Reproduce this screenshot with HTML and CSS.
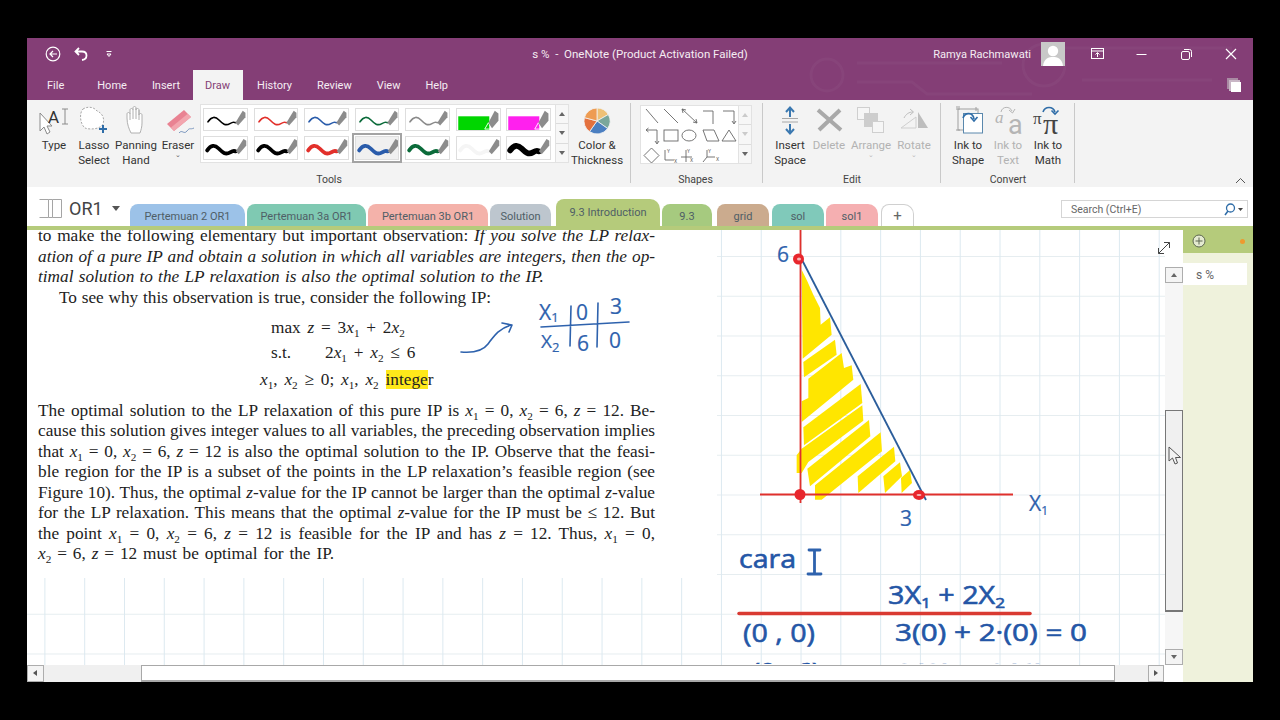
FILE: index.html
```html
<!DOCTYPE html>
<html lang="en">
<head>
  <meta charset="UTF-8">
  <title>s % - OneNote</title>
  <link rel="stylesheet" href="styles.css">
</head>
<body>

  <!-- shared pen drawing for the gallery -->
  <svg class="defs" width="0" height="0">
    <symbol id="pen" viewBox="0 0 44 23">
      <path d="M3 14 C7 8 11 8 15 12 S22 19 27 16 S31 15 33 15" fill="none" stroke="currentColor" stroke-linecap="round"/>
      <path d="M33 15 L41 2 L44 4 L44 9 L36 18 Z" fill="#8c8c8c"/>
    </symbol>
    <symbol id="marker" viewBox="0 0 44 23">
      <rect x="0" y="8" width="34" height="15" fill="currentColor"/>
      <path d="M29 22 L33 15 L37 22 Z" fill="none" stroke="#fff"/>
      <path d="M33 15 L40 2 L44 5 L44 13 L37 21 Z" fill="#8c8c8c"/>
    </symbol>
  </svg>

  <div class="window">

    <!-- Title bar and ribbon tabs -->
    <header class="titlebar">
      <svg class="title-art" width="500" height="62" viewBox="0 0 500 62">
        <circle cx="65" cy="37" r="16" />
        <circle cx="282" cy="27" r="21" />
        <path d="M95 25 H240 M95 44 L150 44 L165 56 H270 M300 10 H470 M320 42 H450" />
      </svg>
      <div class="title-row">
        <div class="quick">
          <svg width="16" height="16" viewBox="0 0 16 16" class="ico-white"><circle cx="8" cy="8" r="6.8"/><path d="M12 8 H5 M8 5 L5 8 L8 11"/></svg>
          <svg width="16" height="16" viewBox="0 0 16 16" class="ico-white bold"><path d="M6 2 L2.500 5.500 L6 9 M3 5.500 H9 C15 5.500 15 13 9 14"/></svg>
          <svg width="8" height="8" viewBox="0 0 8 8" class="ico-white thin more"><path d="M1.500 1.500 H6.500 M2 4 H6 L4 6.500 Z"/></svg>
        </div>
        <div class="title-text">s %&nbsp; -&nbsp; OneNote (Product Activation Failed)</div>
        <div class="title-right">
          <span class="user-name">Ramya Rachmawati</span>
          <svg class="avatar" width="24" height="24" viewBox="0 0 24 24"><rect width="24" height="24" fill="#c8c8c8"/><circle cx="12" cy="9" r="5.200" fill="#fff"/><path d="M2 24 C3 16 8 15 12 15 S21 16 22 24 Z" fill="#fff"/></svg>
          <div class="win-btn"><svg width="13" height="12" viewBox="0 0 13 12" class="ico-white thin"><rect x=".5" y=".5" width="12" height="10"/><path d="M.5 3 H12.500 M6.500 9 V5 M4.500 6.500 L6.500 4.500 L8.500 6.500"/></svg></div>
          <div class="win-btn"><svg width="11" height="11" viewBox="0 0 11 11" class="ico-white thin"><path d="M.5 5.500 H10.500"/></svg></div>
          <div class="win-btn"><svg width="11" height="11" viewBox="0 0 11 11" class="ico-white thin"><rect x=".5" y="2.500" width="8" height="8" rx="1.500"/><path d="M3 .5 H8.500 A2 2 0 0 1 10.500 2.500 V8"/></svg></div>
          <div class="win-btn"><svg width="12" height="12" viewBox="0 0 12 12" class="ico-white"><path d="M1 1 L11 11 M11 1 L1 11"/></svg></div>
        </div>
      </div>
      <nav class="tab-row">
        <a class="menu-tab file-tab">File</a>
        <a class="menu-tab">Home</a>
        <a class="menu-tab">Insert</a>
        <a class="menu-tab active">Draw</a>
        <a class="menu-tab">History</a>
        <a class="menu-tab">Review</a>
        <a class="menu-tab">View</a>
        <a class="menu-tab">Help</a>
        <svg class="feed-icon" width="16" height="16" viewBox="0 0 16 16"><rect x="1" y="1" width="11" height="11" fill="#a98aa3"/><rect x="3" y="3" width="11" height="11" fill="#c9b6c6"/><rect x="5" y="5" width="10" height="10" fill="#fff"/></svg>
      </nav>
    </header>

    <!-- Draw ribbon -->
    <section class="ribbon">

      <div class="group group-tools">
        <div class="group-body">
          <div class="tool w40">
            <svg class="ico" viewBox="0 0 36 34"><path d="M4 9 V27 L8 23 L11 30 L14 28 L11 22 L16 22 Z" fill="#fff" stroke="#8a8a8a"/><text x="12" y="19" class="type-a">A</text><path d="M26 5 H32 M29 5 V20 M26 20 H32" fill="none" stroke="#8a8a8a"/></svg>
            <span>Type</span>
          </div>
          <div class="tool w40">
            <svg class="ico" viewBox="0 0 36 34"><path d="M7 5 C12 2 18 3 21 7 C26 9 29 14 27 20 C25 25 14 26 9 24 C4 20 3 9 7 5 Z" fill="#fff" stroke="#a8a8a8" stroke-dasharray="2 1.500"/><path d="M27 21 V29 M23 25 H31" stroke="#2f6da8" stroke-width="2"/></svg>
            <span>Lasso<br>Select</span>
          </div>
          <div class="tool w44">
            <svg class="ico" viewBox="0 0 36 34"><path d="M13 29 C11 25 9 20 9 14 V10 C9 8 12 8 12 10 V6 C12 4 15 4 15 6 V4 C15 2 18 2 18 4 V6 C18 4 21 4 21 6 V11 C21 9 24 9 24 11 V19 C24 23 23 26 22 29 Z M12 10 V16 M15 6 V15 M18 4 V15 M21 6 V16" fill="#fff" stroke="#b0b0b0"/></svg>
            <span>Panning<br>Hand</span>
          </div>
          <div class="tool w40">
            <svg class="ico" viewBox="0 0 36 34"><path d="M7 20 L24 6 L31 13 L14 27 Z" fill="#e98292"/><path d="M11 23.500 L27.500 10 L31 13 L14 27 Z" fill="#f2a5ae"/><path d="M19 29 C22 25 24 31 27 27 S30 26 34 24" fill="none" stroke="#7f9ac0"/></svg>
            <span>Eraser<br><i class="caret">&#711;</i></span>
          </div>
          <div class="pen-gallery">
            <div class="pen-grid">
              <div class="pen-cell c-black w-thin"><svg><use href="#pen"/></svg></div>
              <div class="pen-cell c-red w-thin"><svg><use href="#pen"/></svg></div>
              <div class="pen-cell c-blue w-thin"><svg><use href="#pen"/></svg></div>
              <div class="pen-cell c-green w-thin"><svg><use href="#pen"/></svg></div>
              <div class="pen-cell c-gray w-thin"><svg><use href="#pen"/></svg></div>
              <div class="pen-cell c-lime"><svg><use href="#marker"/></svg></div>
              <div class="pen-cell c-pink"><svg><use href="#marker"/></svg></div>
              <div class="pen-cell c-black w-mid"><svg><use href="#pen"/></svg></div>
              <div class="pen-cell c-black w-mid"><svg><use href="#pen"/></svg></div>
              <div class="pen-cell c-red w-mid"><svg><use href="#pen"/></svg></div>
              <div class="pen-cell c-blue w-mid selected"><svg><use href="#pen"/></svg></div>
              <div class="pen-cell c-green w-mid"><svg><use href="#pen"/></svg></div>
              <div class="pen-cell c-white w-mid"><svg><use href="#pen"/></svg></div>
              <div class="pen-cell c-black w-fat"><svg><use href="#pen"/></svg></div>
            </div>
            <div class="gal-scroll">
              <span class="arrow-up"></span>
              <span class="arrow-down"></span>
              <span class="arrow-more"></span>
            </div>
          </div>
          <div class="tool w50 color-tool">
            <svg class="ico" viewBox="0 0 36 34" stroke="#f3f3f3" stroke-width=".8">
              <path d="M18 17 V4 A13 13 0 0 1 29.300 10.500 Z" fill="#efc177"/>
              <path d="M18 17 L29.300 10.500 A13 13 0 0 1 28.600 24.500 Z" fill="#7aa79b"/>
              <path d="M18 17 L28.600 24.500 A13 13 0 0 1 10.500 27.600 Z" fill="#4b7fc1"/>
              <path d="M18 17 L10.500 27.600 A13 13 0 0 1 5.400 13.600 Z" fill="#e4713e"/>
              <path d="M18 17 L5.400 13.600 A13 13 0 0 1 18 4 Z" fill="#ee9c52"/>
            </svg>
            <span>Color &amp;<br>Thickness</span>
          </div>
        </div>
        <div class="group-label">Tools</div>
      </div>

      <div class="group group-shapes">
        <div class="group-body">
          <div class="shape-gallery">
            <svg width="97" height="58" viewBox="0 0 97 58" class="shape-lines">
              <path d="M5 3 L17 17 M23 3 L37 17 M41 3 L56 17 M41 3 l4 1 M41 3 l1 4 M56 17 l-4 -1 M56 17 l-1 -4 M62 5 H72 V18 M82 5 H93 V17 M91 15 L93 18 L95 15"/>
              <path d="M12 24 H5 M5 24 l2.500 -2 M5 24 l2.500 2 M12 24 H16 V37 M14 35 L16 38 L18 35"/>
              <rect x="23" y="24" width="14" height="11"/>
              <ellipse cx="48" cy="29.500" rx="7" ry="5.500"/>
              <path d="M62 24 H73 L78 35 H66 Z M88 24 L95 35 H81 Z"/>
              <path d="M10.500 42 L18 49.500 L10.500 57 L3 49.500 Z"/>
              <path d="M24 44 V54 H33 M45 44 V56 M40 51 H51 M66 44 V51 H74 M66 51 L62 56"/>
              <text x="26" y="47" class="axis">Y</text><text x="33" y="57" class="axis">X</text>
              <text x="46" y="47" class="axis">Y</text><text x="49" y="56" class="axis">X</text>
              <text x="67" y="47" class="axis">Y</text><text x="75" y="55" class="axis">X</text>
            </svg>
            <div class="gal-scroll faded">
              <span class="arrow-up"></span>
              <span class="arrow-down"></span>
              <span class="arrow-more"></span>
            </div>
          </div>
        </div>
        <div class="group-label">Shapes</div>
      </div>

      <div class="group group-edit">
        <div class="group-body">
          <div class="tool w38">
            <svg class="ico" viewBox="0 0 36 34"><path d="M18 4 V13 M14 8 L18 3.500 L22 8 M18 20 V29 M14 25 L18 29.500 L22 25" fill="none" stroke="#3a78b0" stroke-width="2"/><path d="M10 14.500 H26 M10 18 H26" stroke="#a8a8a8"/></svg>
            <span>Insert<br>Space</span>
          </div>
          <div class="tool w40 disabled">
            <svg class="ico" viewBox="0 0 36 34"><path d="M7 6 L30 26 M29 6 L8 26" stroke="#a9a9a9" stroke-width="4"/></svg>
            <span>Delete</span>
          </div>
          <div class="tool w44 disabled">
            <svg class="ico" viewBox="0 0 36 34"><rect x="4.500" y="3.500" width="12" height="12" fill="#f6f6f6" stroke="#cfcfcf"/><rect x="11" y="9" width="14" height="14" fill="#cdcdcd"/><rect x="19.500" y="17.500" width="11" height="11" fill="#f6f6f6" stroke="#cfcfcf"/></svg>
            <span>Arrange<br><i class="caret">&#711;</i></span>
          </div>
          <div class="tool w42 disabled">
            <svg class="ico" viewBox="0 0 36 34"><path d="M22 8 L32 24 H22 Z" fill="#bdbdbd"/><path d="M5 24 L20 13 V24 Z" fill="none" stroke="#cfcfcf"/><path d="M8 14 C10 10 13 8 17 8 M14 5 L17.500 8 L14 11" fill="none" stroke="#bdbdbd"/></svg>
            <span>Rotate<br><i class="caret">&#711;</i></span>
          </div>
        </div>
        <div class="group-label">Edit</div>
      </div>

      <div class="group group-convert">
        <div class="group-body">
          <div class="tool w40">
            <svg class="ico" viewBox="0 0 36 34"><rect x="8" y="5" width="20" height="21" fill="none" stroke="#a0a0a0"/><path d="M6 3 H10 M6 5 H10 M26 3 V7 M6 26 H10" stroke="#a0a0a0"/><rect x="13.500" y="9.500" width="19" height="19.500" fill="#fff" stroke="#5a88ad"/><path d="M13 14 C15 8 23 8 24 15 M20.500 13 L24 17 L27.500 13" fill="none" stroke="#2f6da8" stroke-width="1.600"/></svg>
            <span>Ink to<br>Shape</span>
          </div>
          <div class="tool w40 disabled">
            <svg class="ico" viewBox="0 0 36 34"><text x="5" y="19" class="ink2t-small">a</text><text x="18" y="30" class="ink2t-big">a</text><path d="M11 8 C12 2 20 2 22 7 M19 6 L22.500 9 L25 5" fill="none" stroke="#b5b5b5"/></svg>
            <span>Ink to<br>Text</span>
          </div>
          <div class="tool w40">
            <svg class="ico" viewBox="0 0 36 34"><text x="3" y="20" class="pi-small">&#960;</text><text x="13" y="30" class="pi-big">&#960;</text><path d="M13 8 C15 2 23 2 25 8 M21.500 6.500 L25 10 L28.500 6.500" fill="none" stroke="#2f6da8" stroke-width="1.600"/></svg>
            <span>Ink to<br>Math</span>
          </div>
        </div>
        <div class="group-label">Convert</div>
      </div>

      <svg class="collapse" width="11" height="7" viewBox="0 0 11 7"><path d="M1 6 L5.500 1.500 L10 6" fill="none" stroke="#555"/></svg>
    </section>

    <!-- Notebook name and section tabs -->
    <div class="notebook-bar">
      <div class="notebook-name">
        <svg width="23" height="19" viewBox="0 0 23 19"><path d="M.5 .5 H9.500 V18.500 H.5 M13.500 .5 H22.500 V18.500 H13.500 Z" fill="#fff" stroke="#a5a5a5"/><path d="M9.500 .5 H13.500 M9.500 18.500 H13.500" stroke="#a5a5a5"/></svg>
        <span class="nb-title">OR1</span>
        <span class="nb-caret"></span>
      </div>
      <div class="section-tabs">
        <a class="section s-blue">Pertemuan 2 OR1</a>
        <a class="section s-teal">Pertemuan 3a OR1</a>
        <a class="section s-salmon">Pertemuan 3b OR1</a>
        <a class="section s-gray">Solution</a>
        <a class="section s-current">9.3 Introduction</a>
        <a class="section s-green">9.3</a>
        <a class="section s-brown">grid</a>
        <a class="section s-aqua">sol</a>
        <a class="section s-pink">sol1</a>
        <a class="section s-add">+</a>
      </div>
      <div class="search-box">
        <span>Search (Ctrl+E)</span>
        <svg width="21" height="13" viewBox="0 0 21 13"><circle cx="7.500" cy="5" r="4" fill="none" stroke="#2f6da8" stroke-width="1.300"/><path d="M5 8 L2 12" stroke="#2f6da8" stroke-width="1.500"/><path d="M15 5 H20 L17.500 8 Z" fill="#444"/></svg>
      </div>
    </div>

    <!-- Page area -->
    <div class="workspace">
      <div class="page-area">
        <div class="canvas-row">
          <div class="canvas">

            <!-- scanned textbook picture pasted on the page -->
            <div class="scan">
              <div class="text-block">
                <div class="ln">to make the following elementary but important observation: <em>If you solve the LP relax-</em></div>
                <div class="ln"><em>ation of a pure IP and obtain a solution in which all variables are integers, then the op-</em></div>
                <div class="ln-free third"><em>timal solution to the LP relaxation is also the optimal solution to the IP.</em></div>
                <div class="ln-free indent">To see why this observation is true, consider the following IP:</div>
                <div class="math m1">max <em>z</em> = 3<em>x</em><sub>1</sub> + 2<em>x</em><sub>2</sub></div>
                <div class="math m2"><span class="st">s.t.</span>2<em>x</em><sub>1</sub> + <em>x</em><sub>2</sub> &le; 6</div>
                <div class="math m3"><em>x</em><sub>1</sub>, <em>x</em><sub>2</sub> &ge; 0; <em>x</em><sub>1</sub>, <em>x</em><sub>2</sub> <mark>intege</mark>r</div>
                <div class="ln para">The optimal solution to the LP relaxation of this pure IP is <em>x</em><sub>1</sub> = 0, <em>x</em><sub>2</sub> = 6, <em>z</em> = 12. Be-</div>
                <div class="ln">cause this solution gives integer values to all variables, the preceding observation implies</div>
                <div class="ln">that <em>x</em><sub>1</sub> = 0, <em>x</em><sub>2</sub> = 6, <em>z</em> = 12 is also the optimal solution to the IP. Observe that the feasi-</div>
                <div class="ln">ble region for the IP is a subset of the points in the LP relaxation&rsquo;s feasible region (see</div>
                <div class="ln">Figure 10). Thus, the optimal <em>z</em>-value for the IP cannot be larger than the optimal <em>z</em>-value</div>
                <div class="ln">for the LP relaxation. This means that the optimal <em>z</em>-value for the IP must be &le; 12. But</div>
                <div class="ln">the point <em>x</em><sub>1</sub> = 0, <em>x</em><sub>2</sub> = 6, <em>z</em> = 12 is feasible for the IP and has <em>z</em> = 12. Thus, <em>x</em><sub>1</sub> = 0,</div>
                <div class="ln-free wide"><em>x</em><sub>2</sub> = 6, <em>z</em> = 12 must be optimal for the IP.</div>
              </div>
            </div>

            <!-- handwritten ink, viewBox is in window pixels -->
            <svg class="ink" width="1138" height="434" viewBox="27 230 1138 434">
              <g transform="translate(720 228) scale(.3333)" fill="#ffe600">
                <path d="M245 125 L262 160 L280 200 L300 240 L302 290 L330 268 L335 320 L248 392 Z"/>
                <path d="M250 402 L345 335 L350 380 L252 448 Z"/>
                <path d="M265 452 L365 375 L372 420 L395 412 L400 455 L245 582 V520 L265 510 Z"/>
                <path d="M250 598 L422 468 L427 525 L252 652 Z"/>
                <path d="M245 662 L427 532 L430 578 L265 702 L245 735 L230 735 L230 682 Z"/>
                <path d="M262 722 L447 576 L451 625 L270 775 Z"/>
                <path d="M285 772 L482 613 L486 670 L305 815 L285 815 Z"/>
                <path d="M413 745 L522 656 L526 700 L415 795 Z"/>
                <path d="M490 745 L540 703 L546 745 L495 795 Z"/>
                <path d="M543 750 L570 726 L576 765 L545 795 Z"/>
              </g>

              <g class="red-ink">
                <path d="M800.500 230 V503 M760 494.500 H1013"/>
                <path d="M739 613.500 H1030" class="red-thick"/>
              </g>
              <path d="M800 256 L926 500" class="navy-line"/>
              <ellipse cx="798.500" cy="259" rx="5.500" ry="5.500" fill="#e8262c"/>
              <ellipse cx="799" cy="259" rx="2" ry="1.500" fill="#f6b8b8"/>
              <circle cx="800" cy="494.500" r="5.500" fill="#e8262c"/>
              <ellipse cx="919" cy="495" rx="6" ry="5" fill="#e8262c"/>
              <ellipse cx="919" cy="495" rx="2.500" ry="1" fill="#f6b8b8"/>

              <path d="M461 352 C472 353 482 352 488 344 C494 336 498 329 511 325 M502 323 L512 325 L509 332" class="blue-line"/>
              <path d="M541 327 L629 322 M571 306 L570 346 M598 303 L597 347" class="blue-line"/>

              <text class="hand" x="539" y="320" font-size="21">X<tspan font-size="13" dy="2">1</tspan></text>
              <text class="hand" x="576" y="320" font-size="21">0</text>
              <text class="hand" x="610" y="314" font-size="21">3</text>
              <text class="hand" x="541" y="348" font-size="19">X<tspan font-size="13" dy="4">2</tspan></text>
              <text class="hand" x="577" y="351" font-size="21">6</text>
              <text class="hand" x="609" y="348" font-size="21">0</text>

              <text class="hand" x="777" y="262" font-size="21">6</text>
              <text class="hand" x="900" y="526" font-size="21">3</text>
              <text class="hand" x="1029" y="511" font-size="21">X<tspan font-size="12" dy="4">1</tspan></text>

              <text class="hand heavy" x="739" y="568" font-size="25" textLength="57" lengthAdjust="spacingAndGlyphs">cara</text>
              <path d="M809 550 H820 M814.500 550 V574 M808 574 H821" class="blue-line bold-line"/>
              <text class="hand heavy" x="888" y="604" font-size="25" textLength="117" lengthAdjust="spacingAndGlyphs">3X<tspan font-size="15" dy="4">1</tspan><tspan dy="-4"> + 2X</tspan><tspan font-size="15" dy="4">2</tspan></text>
              <text class="hand heavy" x="743" y="642" font-size="26" textLength="72" lengthAdjust="spacingAndGlyphs">(0 , 0)</text>
              <text class="hand heavy" x="895" y="641" font-size="24" textLength="192" lengthAdjust="spacingAndGlyphs">3(0) +  2&#183;(0) = 0</text>
              <text class="hand heavy" x="752" y="681" font-size="26" textLength="68" lengthAdjust="spacingAndGlyphs">(0 , 6)</text>
              <text class="hand heavy" x="895" y="681" font-size="24" textLength="150" lengthAdjust="spacingAndGlyphs">3(0) +  2(6)</text>
            </svg>
          </div>

          <div class="vscroll">
            <div class="v-top"></div>
            <div class="sb-btn"><span class="arrow-up dark"></span></div>
            <div class="v-track v-upper"></div>
            <div class="v-thumb"></div>
            <div class="v-track v-lower"></div>
            <div class="sb-btn"><span class="arrow-down dark"></span></div>
          </div>
        </div>

        <div class="hscroll">
          <div class="sb-btn h-btn"><span class="arrow-left"></span></div>
          <div class="h-track h-left"></div>
          <div class="h-thumb"></div>
          <div class="h-track h-right"></div>
          <div class="sb-btn h-btn"><span class="arrow-right"></span></div>
          <div class="h-corner"></div>
        </div>
      </div>

      <aside class="page-list">
        <div class="page-list-head">
          <svg width="14" height="14" viewBox="0 0 14 14"><circle cx="7" cy="7" r="6" fill="#e4ead0" stroke="#5c6650"/><path d="M7 3.500 V10.500 M3.500 7 H10.500" stroke="#5c6650"/></svg>
          <span class="dot"></span>
        </div>
        <div class="page-item">s %</div>
      </aside>

      <svg class="expand" width="14" height="14" viewBox="0 0 14 14"><path d="M1.500 12.500 L12.500 1.500 M7 1.500 H12.500 V7 M1.500 7 V12.500 H7" fill="none" stroke="#444"/></svg>
      <svg class="cursor" width="14" height="20" viewBox="0 0 14 20"><path d="M1 1 V15 L4.500 12 L7 18 L9.500 17 L7.500 11.500 L12.500 11.500 Z" fill="#f2f2f2" stroke="#555"/></svg>
    </div>
  </div>

</body>
</html>
```
FILE: styles.css
```css
/* General Reset */
* {
  margin: 0;
  padding: 0;
  box-sizing: border-box;
}

body {
  width: 1280px;
  height: 720px;
  overflow: hidden;
  background-color: #000;
  font-family: 'Roboto', 'Liberation Sans', sans-serif;
  color: #333;
  font-size: 11.5px;
}

.defs {
  position: absolute;
}

.window {
  margin: 38px 27px 0;
  width: 1226px;
  height: 644px;
  background-color: #fff;
  display: flex;
  flex-direction: column;
}

/* Title bar */
.titlebar {
  position: relative;
  height: 62px;
  background-color: #843e76;
  color: #f5edf3;
}

.title-art {
  position: absolute;
  left: 735px;
  top: 0;
  fill: none;
  stroke: rgba(255, 255, 255, 0.03);
  stroke-width: 3;
}

.title-row {
  position: relative;
  height: 32px;
  display: grid;
  grid-template-columns: 1fr auto 1fr;
  align-items: center;
}

.quick {
  display: flex;
  align-items: center;
  padding-left: 18px;
  gap: 12px;
}

.quick .more {
  margin-left: 4px;
}

.ico-white {
  fill: none;
  stroke: #fff;
  stroke-width: 1.2;
}

.ico-white.bold {
  stroke-width: 1.8;
}

.ico-white.thin {
  stroke-width: 1;
}

.title-text {
  font-size: 11.5px;
}

.title-right {
  display: flex;
  justify-content: flex-end;
  align-items: center;
  height: 32px;
}

.user-name {
  font-size: 11.1px;
  margin-right: 10px;
}

.avatar {
  margin-right: 10px;
}

.win-btn {
  width: 44.5px;
  display: flex;
  justify-content: center;
}

.tab-row {
  position: relative;
  height: 30px;
  display: flex;
  align-items: stretch;
  font-size: 11px;
}

.menu-tab {
  display: flex;
  align-items: center;
  padding: 0 12.5px;
}

.file-tab {
  padding: 0 33px 0 20px;
  margin-right: -12.5px;
}

.menu-tab.active {
  margin-right: 2px;
  background-color: #f3f3f3;
  color: #843e76;
}

.feed-icon {
  margin: 7px 11px 0 auto;
}

/* Ribbon */
.ribbon {
  position: relative;
  height: 87px;
  background-color: #f3f3f3;
  display: flex;
}

.group {
  position: relative;
  display: flex;
  flex-direction: column;
}

.group::after {
  content: "";
  position: absolute;
  right: 0;
  top: 3px;
  bottom: 4px;
  width: 1px;
  background-color: #c9c9c9;
}

.group-tools {
  width: 604px;
}

.group-tools .group-body {
  padding-left: 7px;
}

.group-shapes {
  width: 132px;
}

.group-shapes .group-label {
  padding-right: 3px;
}

.group-edit {
  width: 178px;
}

.group-edit .group-body {
  padding-left: 8px;
}

.group-convert {
  width: 134px;
}

.group-convert .group-body {
  padding-left: 7px;
}

.group-body {
  flex: 1;
  display: flex;
  padding-top: 4px;
}

.group-label {
  height: 15px;
  line-height: 15px;
  text-align: center;
  font-size: 10.5px;
  color: #444;
}

.tool {
  display: flex;
  flex-direction: column;
  align-items: center;
  text-align: center;
  line-height: 15px;
  color: #333;
}

.tool.disabled {
  color: #b2b2b2;
}

.w38 { width: 38px; }
.w40 { width: 40px; }
.w42 { width: 42px; }
.w44 { width: 44px; }
.w50 { width: 50px; }

.ico {
  width: 36px;
  height: 34px;
  overflow: visible;
}

.caret {
  font-style: normal;
  font-size: 11px;
  color: #666;
}

.disabled .caret {
  color: #bbb;
}

.type-a {
  font: 17px 'Roboto', sans-serif;
  fill: #333;
}

.ink2t-small {
  font: italic 17px 'Liberation Serif', serif;
  fill: #b5b5b5;
}

.ink2t-big {
  font: 27px 'Roboto', sans-serif;
  fill: #b5b5b5;
}

.pi-small {
  font: 17px 'Liberation Serif', serif;
  fill: #444;
}

.pi-big {
  font: 30px 'Liberation Serif', serif;
  fill: #444;
}

/* Pen gallery */
.pen-gallery {
  margin-left: 2px;
  width: 369px;
  height: 59px;
  display: flex;
  background-color: #fff;
  border: 1px solid #e2e2e2;
}

.pen-grid {
  width: 354px;
  padding: 3px 0 0 2px;
  display: grid;
  grid-template-columns: repeat(7, 44.7px);
  grid-template-rows: 23px 24px;
  column-gap: 5.9px;
  row-gap: 5px;
}

.pen-cell {
  position: relative;
  border: 1px solid #dedede;
  background-color: #fff;
}

.pen-cell svg {
  display: block;
  width: 100%;
  height: 100%;
}

.pen-cell.selected {
  outline: 2px solid #a3a3a3;
  outline-offset: 1px;
  background-color: #f0f0f0;
}

.c-black { color: #000; }
.c-red { color: #e2302b; }
.c-blue { color: #2a5cab; }
.c-green { color: #0b6b3a; }
.c-gray { color: #8a8a8a; }
.c-lime { color: #00d600; }
.c-pink { color: #ff20ee; }
.c-white { color: #f5f5f5; }

.w-thin { stroke-width: 1.8; }
.w-mid { stroke-width: 4; }
.w-fat { stroke-width: 6; }

.gal-scroll {
  flex: 1;
  display: flex;
  flex-direction: column;
  border-left: 1px solid #e2e2e2;
  background-color: #f7f7f7;
}

.gal-scroll span {
  flex: 1;
  position: relative;
}

.gal-scroll span + span {
  border-top: 1px solid #dcdcdc;
}

.arrow-up::after,
.arrow-down::after,
.arrow-more::after {
  content: "";
  position: absolute;
  left: 50%;
  top: 50%;
  margin: -2px 0 0 -3px;
  border-left: 3px solid transparent;
  border-right: 3px solid transparent;
}

.arrow-up::after {
  border-bottom: 4px solid #666;
}

.arrow-down::after,
.arrow-more::after {
  border-top: 4px solid #666;
}

.faded .arrow-up::after,
.faded .arrow-down::after {
  opacity: 0.3;
}

.color-tool {
  margin-left: 3px;
}

/* Shapes gallery */
.group-shapes .group-body {
  padding-left: 9px;
  padding-top: 5px;
}

.shape-gallery {
  width: 112px;
  height: 59px;
  display: flex;
  background-color: #fff;
  border: 1px solid #e2e2e2;
}

.shape-lines {
  fill: none;
  stroke: #666;
  stroke-width: 0.9;
}

.axis {
  font: 5px 'Roboto', sans-serif;
  fill: #666;
  stroke: none;
}

.collapse {
  position: absolute;
  right: 7px;
  bottom: 3px;
}

/* Notebook bar */
.notebook-bar {
  height: 39px;
  display: flex;
  align-items: flex-end;
  background-color: #fff;
}

.notebook-name {
  width: 103px;
  height: 33px;
  padding-left: 12px;
  display: flex;
  align-items: center;
  gap: 7px;
  padding-bottom: 2px;
}

.nb-title {
  font-size: 18px;
  color: #444;
}

.nb-caret {
  margin-left: 2px;
  border-left: 4.500px solid transparent;
  border-right: 4.500px solid transparent;
  border-top: 5px solid #555;
}

.section-tabs {
  display: flex;
  align-items: flex-end;
  gap: 2px;
}

.section {
  height: 22px;
  min-width: 52px;
  padding-top: 2px;
  display: flex;
  align-items: center;
  justify-content: center;
  white-space: nowrap;
  border-radius: 8px 10px 0 0;
  color: #4f5e66;
  font-size: 11px;
}

.s-blue { width: 115px; background-color: #9cc2e8; }
.s-teal { width: 119px; background-color: #7fc9b2; }
.s-salmon { width: 120px; background-color: #f4b2aa; }
.s-gray { width: 61px; margin-right: 3px; background-color: #bdc6ce; }
.s-current { width: 104px; height: 27px; padding: 0; background-color: #b5cb7b; }
.s-green { min-width: 50px; width: 50px; background-color: #a6ca7f; }
.s-brown { margin-left: 3px; background-color: #cbab8e; }
.s-aqua { margin-left: 1px; background-color: #80c9ba; }
.s-pink { background-color: #f5afb1; }
.s-add { width: 33px; min-width: 0; margin-left: 1px; padding: 0; background-color: #fff; border: 1px solid #d0d0d0; border-bottom: 0; font-size: 15px; color: #666; }

.search-box {
  margin: 0 5px 8px auto;
  width: 187px;
  height: 18px;
  padding: 0 3px 0 9px;
  display: flex;
  align-items: center;
  justify-content: space-between;
  border: 1px solid #d5d5d5;
  font-size: 10.5px;
  color: #666;
}

/* Page area */
.workspace {
  position: relative;
  flex: 1;
  min-height: 0;
  display: flex;
  border-top: 4px solid #b5cb7b;
}

.page-area {
  width: 1156px;
  display: flex;
  flex-direction: column;
}

.canvas-row {
  flex: 1;
  min-height: 0;
  display: flex;
}

.canvas {
  position: relative;
  width: 1138px;
  overflow: hidden;
  background-color: #fff;
  background-image:
    linear-gradient(to right, #dce9f0 1px, transparent 1px),
    linear-gradient(to bottom, #e6edf0 1px, transparent 1px);
  background-size: 39.8px 39.75px;
  background-position: 17.4px 26px;
}

.scan {
  position: absolute;
  left: 0;
  top: 0;
  width: 690px;
  height: 348px;
  background-color: #fff;
  overflow: hidden;
}

.text-block {
  margin: -4px 0 0 11px;
  width: 617px;
  font-family: 'Liberation Serif', serif;
  font-size: 17.25px;
  line-height: 20.5px;
  color: #222;
}

.ln {
  text-align: justify;
  text-align-last: justify;
  white-space: nowrap;
}

.ln-free {
  white-space: nowrap;
}

.third {
  word-spacing: 0.9px;
}

.wide {
  word-spacing: 1.6px;
}

.indent {
  padding-left: 21px;
  word-spacing: 0.45px;
}

.para {
  margin-top: 10.5px;
}

sub {
  font-size: 0.65em;
  line-height: 0;
}

.math {
  white-space: nowrap;
  word-spacing: 2.5px;
}

.m1 {
  margin-top: 10px;
  padding-left: 233px;
}

.m2 {
  margin-top: 4.500px;
  padding-left: 233px;
}

.st {
  display: inline-block;
  width: 54px;
}

.m3 {
  margin-top: 6px;
  padding-left: 222px;
}

mark {
  background-color: #ffe81a;
  color: inherit;
}

.ink {
  position: absolute;
  left: 0;
  top: 0;
}

.red-ink {
  fill: none;
  stroke: #e0302c;
  stroke-width: 1.800;
}

.red-ink .red-thick {
  stroke-width: 3.500;
  stroke-linecap: round;
  stroke: #d93a32;
}

.navy-line {
  fill: none;
  stroke: #2b5d9b;
  stroke-width: 1.800;
}

.blue-line {
  fill: none;
  stroke: #2e62ad;
  stroke-width: 1.600;
  stroke-linecap: round;
  stroke-linejoin: round;
}

.bold-line {
  stroke-width: 2.800;
}

.hand {
  font-family: 'Open Sans', sans-serif;
  fill: #2e62ad;
  stroke: #2e62ad;
  stroke-width: 0.2;
}

.hand.heavy {
  stroke-width: 0.6;
  fill: #2456a6;
  stroke: #2456a6;
}

.expand {
  position: absolute;
  left: 1130px;
  top: 11px;
}

/* Scrollbars */
.vscroll {
  width: 18px;
  display: flex;
  flex-direction: column;
  background-color: #fff;
}

.v-top {
  height: 37px;
}

.sb-btn {
  position: relative;
  height: 16px;
  border: 1px solid #adadad;
  background-color: #f4f4f4;
}

.arrow-up.dark,
.arrow-down.dark {
  display: block;
  width: 100%;
  height: 100%;
  position: relative;
}

.v-track {
  background-color: #f6f6f6;
}

.v-upper {
  height: 127px;
}

.v-lower {
  flex: 1;
}

.v-thumb {
  height: 202px;
  background-color: #f0f0f0;
  border: 1px solid #777;
  border-bottom-width: 2px;
}

.hscroll {
  height: 17px;
  display: flex;
  background-color: #fff;
}

.h-btn {
  height: 17px;
  width: 17px;
  flex-shrink: 0;
}

.arrow-left,
.arrow-right {
  position: absolute;
  left: 5px;
  top: 4px;
  border-top: 3.500px solid transparent;
  border-bottom: 3.500px solid transparent;
}

.arrow-left {
  border-right: 4px solid #555;
}

.arrow-right {
  border-left: 4px solid #555;
}

.h-track {
  background-color: #f0f0f0;
}

.h-left {
  width: 97px;
}

.h-thumb {
  width: 974px;
  background-color: #fff;
  border: 1px solid #a8a8a8;
  border-width: 1px 1px 2px;
}

.h-right {
  width: 33px;
}

.h-right + .h-btn {
  width: 16px;
}

.h-corner {
  width: 18px;
}

/* Page list */
.page-list {
  width: 70px;
  background-color: #eff2dc;
}

.page-list-head {
  height: 24px;
  margin-top: -1px;
  padding: 0 8px 0 9px;
  display: flex;
  align-items: center;
  justify-content: space-between;
  background-color: #b5cb7b;
}

.dot {
  width: 5px;
  height: 5px;
  border-radius: 50%;
  background-color: #ee9a2e;
}

.page-item {
  margin: 10px 6px 0 0;
  height: 22px;
  line-height: 24px;
  padding-left: 13px;
  background-color: #fff;
  color: #666;
  font-size: 12px;
}

.cursor {
  position: absolute;
  left: 1141px;
  top: 216px;
}
```
